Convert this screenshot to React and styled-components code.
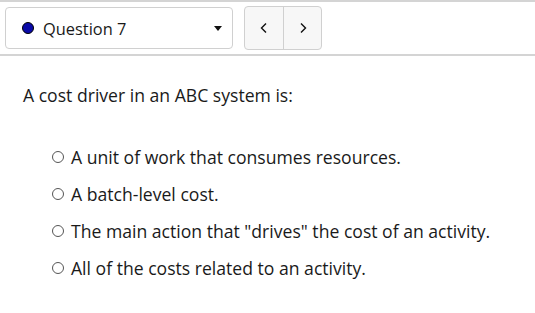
import styled, { createGlobalStyle } from "styled-components";

const GlobalStyle = createGlobalStyle`
  body {
    margin: 0;
    background: #fff;
    font-family: "Open Sans", "Liberation Sans", sans-serif;
    color: #1a1a1a;
  }
`;

const Page = styled.div`
  width: 535px;
  height: 313px;
  overflow: hidden;
`;

const Toolbar = styled.div`
  display: flex;
  align-items: center;
  gap: 11px;
  padding: 4px 5px;
  border-top: 2px solid #d4d4d4;
  border-bottom: 2px solid #d4d4d4;
`;

const Select = styled.div`
  width: 228px;
  height: 42px;
  box-sizing: border-box;
  display: flex;
  align-items: center;
  padding: 0 10px 0 16px;
  border: 1px solid #d0d0d0;
  border-radius: 4px;
  font-size: 16.4px;
`;

const Dot = styled.span`
  width: 10px;
  height: 10px;
  border-radius: 50%;
  background: #0a0aa8;
  border: 1px solid #000;
  margin-right: 9px;
`;

const Label = styled.span`
  flex: 1;
`;

const Caret = styled.span`
  width: 0;
  height: 0;
  border-left: 4px solid transparent;
  border-right: 4px solid transparent;
  border-top: 5px solid #111;
`;

const Nav = styled.div`
  display: flex;
  height: 42px;
  border: 1px solid #d0d0d0;
  border-radius: 4px;
  background: #f7f7f7;
  overflow: hidden;
`;

const NavButton = styled.button`
  width: 38px;
  border: none;
  background: transparent;
  display: flex;
  align-items: center;
  justify-content: center;
  padding: 0;
  & + & {
    border-left: 1px solid #d0d0d0;
  }
`;

const Body = styled.div`
  padding: 27px 23px 0 23px;
`;

const Prompt = styled.p`
  margin: 0 0 39px 0;
  font-size: 17.6px;
  line-height: 24px;
`;

const Options = styled.div`
  display: flex;
  flex-direction: column;
  gap: 15px;
  padding-left: 29px;
`;

const Option = styled.label`
  display: flex;
  align-items: center;
  font-size: 17.6px;
  line-height: 22px;
`;

const Radio = styled.span`
  width: 10px;
  height: 10px;
  border: 1.5px solid #555;
  border-radius: 50%;
  margin-right: 7px;
  flex: none;
`;

const Chevron = ({ dir }) => (
  <svg width="10" height="12" viewBox="0 0 10 12">
    <path
      d={dir === "left" ? "M7 1.5 L2.5 6 L7 10.5" : "M3 1.5 L7.5 6 L3 10.5"}
      fill="none"
      stroke="#111"
      strokeWidth="1.4"
    />
  </svg>
);

const options = [
  "A unit of work that consumes resources.",
  "A batch-level cost.",
  'The main action that "drives" the cost of an activity.',
  "All of the costs related to an activity.",
];

const App = () => (
  <Page>
    <GlobalStyle />
    <Toolbar>
      <Select>
        <Dot />
        <Label>Question 7</Label>
        <Caret />
      </Select>
      <Nav>
        <NavButton>
          <Chevron dir="left" />
        </NavButton>
        <NavButton>
          <Chevron dir="right" />
        </NavButton>
      </Nav>
    </Toolbar>
    <Body>
      <Prompt>A cost driver in an ABC system is:</Prompt>
      <Options>
        {options.map((o) => (
          <Option key={o}>
            <Radio />
            {o}
          </Option>
        ))}
      </Options>
    </Body>
  </Page>
);

export default App;
